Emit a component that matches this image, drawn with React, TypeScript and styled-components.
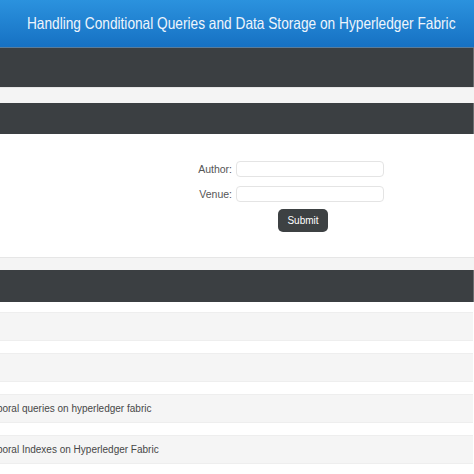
import styled, { createGlobalStyle } from "styled-components";

const GlobalStyle = createGlobalStyle`
  html, body {
    margin: 0;
    padding: 0;
    background: #ffffff;
    font-family: "Liberation Sans", Arial, sans-serif;
    overflow: hidden;
  }
`;

const Page = styled.div`
  width: 474px;
  height: 474px;
  display: flex;
  flex-direction: column;
  overflow: hidden;
`;

const Header = styled.header`
  height: 48px;
  display: flex;
  align-items: center;
  justify-content: center;
  padding-left: 9px;
  background: linear-gradient(to bottom, #2b92de, #1671c3);
  border-bottom: 1px solid #5b7c99;
  box-sizing: border-box;
  flex-shrink: 0;
`;

// the source screenshot is squeezed sideways, so the title is narrowed to match
const Title = styled.h1`
  margin: 0;
  font-weight: normal;
  font-size: 16.5px;
  color: #eef5fc;
  white-space: nowrap;
  transform: scaleX(0.83);
`;

const DarkBar = styled.div<{ $h: number }>`
  height: ${(p) => p.$h}px;
  background: #3b3f42;
  border-right: 1px solid #6a6e70;
  box-sizing: border-box;
  flex-shrink: 0;
`;

const GreyStrip = styled.div<{ $h: number }>`
  height: ${(p) => p.$h}px;
  background: #f4f4f4;
  border-top: 1px solid #e6e6e6;
  box-sizing: border-box;
  flex-shrink: 0;
`;

const Panel = styled.section`
  height: 123px;
  background: #ffffff;
  box-sizing: border-box;
  flex-shrink: 0;
`;

const FormGrid = styled.form`
  display: grid;
  grid-template-columns: 232px 148px;
  column-gap: 4px;
  row-gap: 9px;
  align-items: center;
  padding-top: 27px;
`;

const Label = styled.label`
  text-align: right;
  font-size: 10.5px;
  color: #555555;
`;

const Input = styled.input`
  height: 16px;
  box-sizing: border-box;
  border: 1px solid #e4e4e4;
  border-radius: 4px;
  background: #ffffff;
  padding: 0 4px;
  outline: none;
`;

const SubmitButton = styled.button`
  grid-column: 2;
  justify-self: start;
  margin-left: 42px;
  margin-top: -2px;
  width: 50px;
  height: 23px;
  border: none;
  border-radius: 5px;
  background: #3d4143;
  color: #ffffff;
  font-family: "Liberation Sans", Arial, sans-serif;
  font-size: 10px;
  cursor: pointer;
`;

const List = styled.div`
  display: flex;
  flex-direction: column;
  gap: 12px;
  padding-top: 10px;
`;

const ListRow = styled.div`
  height: 29px;
  width: 473px;
  display: flex;
  align-items: center;
  background: #f5f5f5;
  border-top: 1px solid #eeeeee;
  border-bottom: 1px solid #eeeeee;
  box-sizing: border-box;
  overflow: hidden;
  font-size: 10px;
  color: #474747;
  white-space: nowrap;
  text-indent: -22px;
`;

const rows = [
  "",
  "",
  "Temporal queries on hyperledger fabric",
  "Temporal Indexes on Hyperledger Fabric",
];

export default function App() {
  return (
    <Page>
      <GlobalStyle />
      <Header>
        <Title>Handling Conditional Queries and Data Storage on Hyperledger Fabric</Title>
      </Header>
      <DarkBar $h={39} />
      <GreyStrip $h={16} />
      <DarkBar $h={31} />
      <Panel>
        <FormGrid onSubmit={(e) => e.preventDefault()}>
          <Label htmlFor="author">Author:</Label>
          <Input id="author" type="text" />
          <Label htmlFor="venue">Venue:</Label>
          <Input id="venue" type="text" />
          <SubmitButton type="submit">Submit</SubmitButton>
        </FormGrid>
      </Panel>
      <GreyStrip $h={13} />
      <DarkBar $h={32} />
      <List>
        {rows.map((text, i) => (
          <ListRow key={i}>{text}</ListRow>
        ))}
      </List>
    </Page>
  );
}
